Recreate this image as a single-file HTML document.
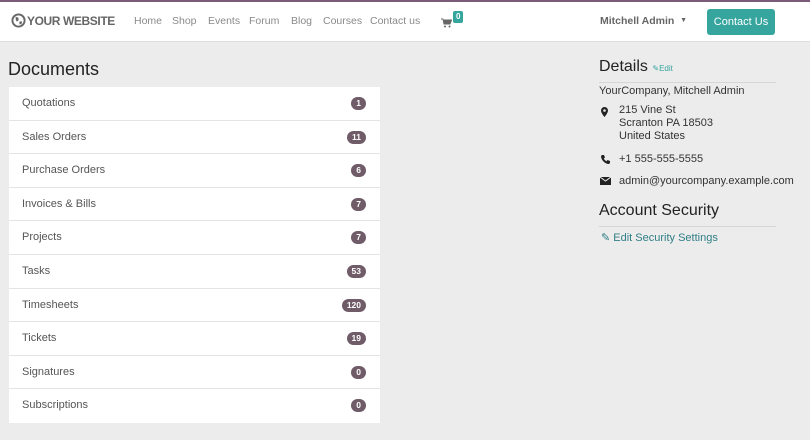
<!DOCTYPE html>
<html><head><style>
*{box-sizing:border-box;margin:0;padding:0}
body{width:810px;height:440px;background:#ececec;font-family:"Liberation Sans",sans-serif;position:relative;overflow:hidden;color:#333}
.top{position:absolute;left:0;top:0;width:810px;height:42px;background:#fff;border-top:2px solid #7c5b78;border-bottom:1px solid #ddd}
.logo{position:absolute;left:27px;top:12px;font-size:12px;font-weight:bold;color:#666;letter-spacing:-0.4px}
.nav{position:absolute;top:13px;font-size:10.5px;color:#8a8a8a}
.user{position:absolute;left:600px;top:13px;font-size:10.5px;color:#666;font-weight:bold}
.btn{position:absolute;left:707px;top:7px;width:68px;height:26px;background:#35a59e;color:#fff;border-radius:3px;font-size:11px;text-align:center;line-height:26px}
h1{position:absolute;left:8px;top:59px;font-size:18px;font-weight:normal;color:#222}
.list{position:absolute;left:9px;top:87px;width:371px;background:#fff}
.row{height:33.6px;border-bottom:1px solid #e4e4e4;position:relative;font-size:11px;color:#555;padding-left:13px;line-height:32px}
.b{position:absolute;right:14px;top:10px;background:#6f5c68;color:#fff;font-size:8.5px;font-weight:bold;border-radius:7px;padding:0 5px;height:13px;line-height:13px;min-width:14px;text-align:center}
.r{position:absolute;font-size:11px;color:#333}
svg{position:absolute}
</style></head><body>
<div class="top">
<svg style="left:11px;top:11px" width="15" height="15" viewBox="0 0 16 16"><circle cx="8" cy="8" r="6.5" fill="none" stroke="#666" stroke-width="2"/><path d="M5 4l3 1 0 3-2 1-1-2zM9 9l3 0-1 3-2 0z" fill="#666"/></svg>
<div class="logo">YOUR WEBSITE</div>
<span class="nav" style="left:134px">Home</span>
<span class="nav" style="left:172px">Shop</span>
<span class="nav" style="left:208px">Events</span>
<span class="nav" style="left:249px">Forum</span>
<span class="nav" style="left:291px">Blog</span>
<span class="nav" style="left:323px">Courses</span>
<span class="nav" style="left:370px">Contact us</span>
<svg style="left:441px;top:16px" width="11" height="10" viewBox="0 0 11 10"><path d="M0 1h2l1 5h6l1.5-4H3" fill="#666" stroke="#666"/><circle cx="4" cy="8.5" r="1" fill="#666"/><circle cx="8.5" cy="8.5" r="1" fill="#666"/></svg>
<span style="position:absolute;left:453px;top:9px;background:#35a59e;color:#fff;font-size:8px;font-weight:bold;padding:0 3px;border-radius:2px;height:12px;line-height:12px">0</span>
<div class="user">Mitchell Admin &nbsp;<span style="font-size:7px;vertical-align:2px">&#9660;</span></div>
<div class="btn">Contact Us</div>
</div>
<h1>Documents</h1>
<div class="list">
<div class="row">Quotations<span class="b">1</span></div>
<div class="row">Sales Orders<span class="b">11</span></div>
<div class="row">Purchase Orders<span class="b">6</span></div>
<div class="row">Invoices &amp; Bills<span class="b">7</span></div>
<div class="row">Projects<span class="b">7</span></div>
<div class="row">Tasks<span class="b">53</span></div>
<div class="row">Timesheets<span class="b">120</span></div>
<div class="row">Tickets<span class="b">19</span></div>
<div class="row">Signatures<span class="b">0</span></div>
<div class="row" style="border:none">Subscriptions<span class="b">0</span></div>
</div>
<div class="r" style="left:599px;top:58px;font-size:16px;color:#222">Details <span style="font-size:8px;color:#35a59e">&#9998;Edit</span></div>
<div style="position:absolute;left:599px;top:82px;width:177px;border-top:1px solid #d6d6d6"></div>
<div class="r" style="left:599px;top:85px">YourCompany, Mitchell Admin</div>
<svg style="left:601px;top:107px" width="7" height="10" viewBox="0 0 7 10"><path d="M3.5 0A3.5 3.5 0 0 0 0 3.5C0 6 3.5 10 3.5 10S7 6 7 3.5A3.5 3.5 0 0 0 3.5 0z" fill="#222"/><circle cx="3.5" cy="3.5" r="1.3" fill="#ececec"/></svg>
<div class="r" style="left:619px;top:104px;line-height:13px">215 Vine St<br>Scranton PA 18503<br>United States</div>
<svg style="left:601px;top:155px" width="9" height="9" viewBox="0 0 9 9"><path d="M1 0l2 0 1 2.5-1.2 1c.6 1.3 1.4 2 2.7 2.7l1-1.2L9 6v2l-1 1C4 9 0 5 0 1z" fill="#222"/></svg>
<div class="r" style="left:619px;top:153px">+1 555-555-5555</div>
<svg style="left:600px;top:177px" width="11" height="8" viewBox="0 0 11 8"><rect width="11" height="8" fill="#222"/><path d="M0 0l5.5 4L11 0" fill="none" stroke="#ececec" stroke-width="1"/></svg>
<div class="r" style="left:619px;top:175px">admin@yourcompany.example.com</div>
<div class="r" style="left:599px;top:202px;font-size:16px;color:#222">Account Security</div>
<div style="position:absolute;left:599px;top:226px;width:177px;border-top:1px solid #d6d6d6"></div>
<div class="r" style="left:601px;top:231px;color:#2f7f86">&#9998; Edit Security Settings</div>
</body></html>
